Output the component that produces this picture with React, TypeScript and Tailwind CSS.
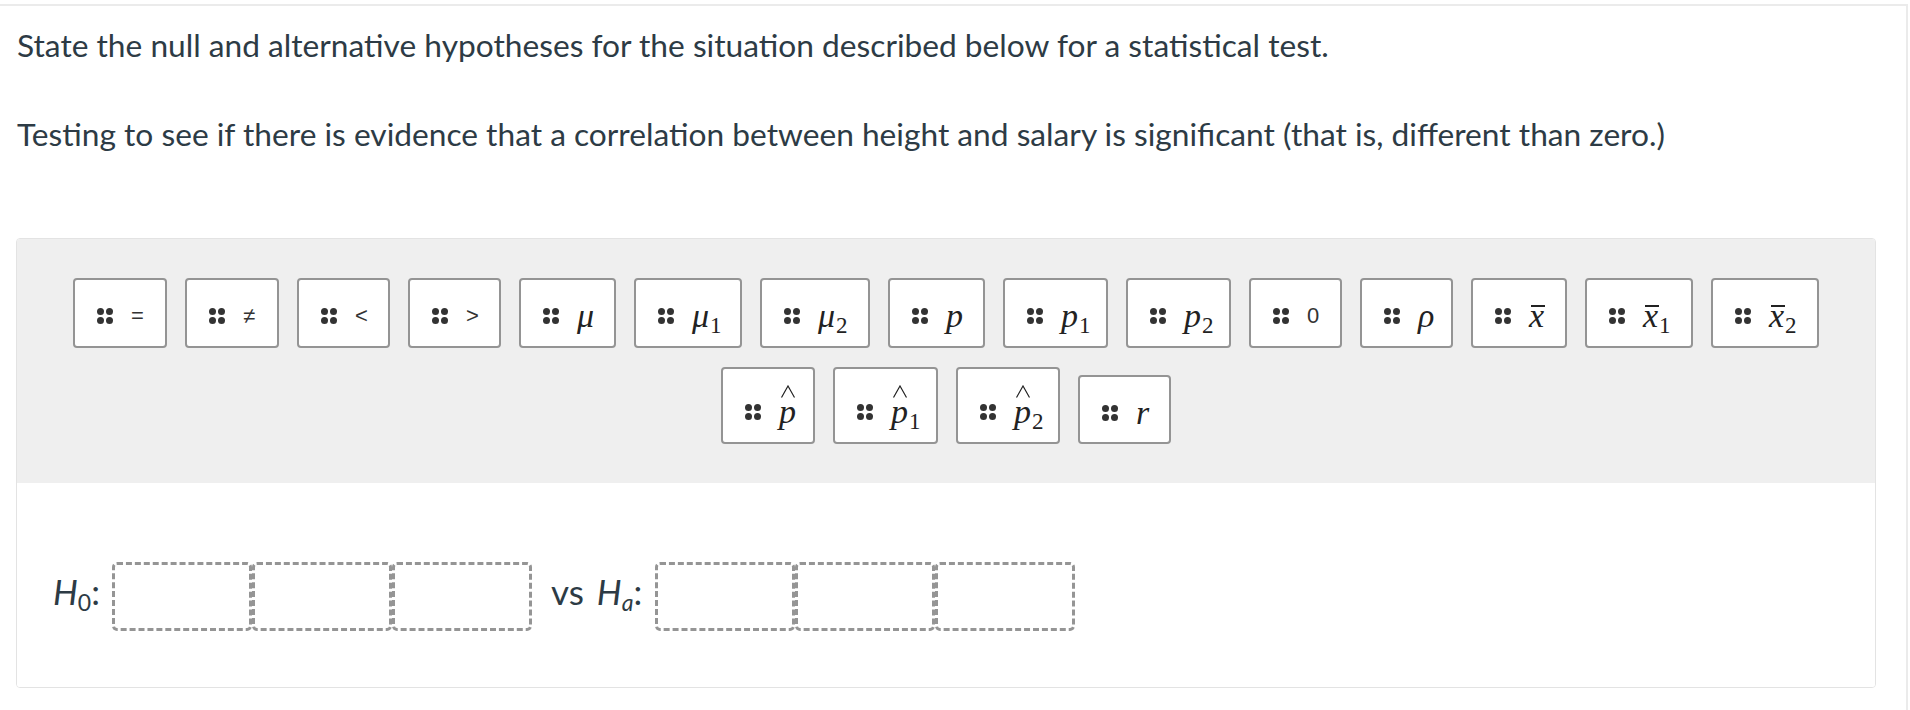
import React from "react";

const Grip = () => (
  <span className="grid grid-cols-2 gap-[2px] w-[16px] shrink-0">
    <span className="w-[7px] h-[7px] rounded-full bg-[#333]" />
    <span className="w-[7px] h-[7px] rounded-full bg-[#333]" />
    <span className="w-[7px] h-[7px] rounded-full bg-[#333]" />
    <span className="w-[7px] h-[7px] rounded-full bg-[#333]" />
  </span>
);

const Sans = ({ c }: { c: string }) => (
  <span className="font-['Liberation_Sans',Arial,sans-serif] text-[22px] leading-none text-[#333]">{c}</span>
);

const Sub = ({ c }: { c: string }) => (
  <span className="inline-block not-italic text-[23px] leading-none translate-y-[6px] ml-[1px]">{c}</span>
);

const MathI = ({
  c,
  sub,
  bar,
  hat,
}: {
  c: string;
  sub?: string;
  bar?: boolean;
  hat?: boolean;
}) => (
  <span className="font-['Liberation_Serif','Times_New_Roman',serif] text-[34px] leading-none text-[#222] inline-flex items-baseline">
    <span className="relative italic">
      {c}
      {bar && <span className="absolute left-[2px] right-[-1px] top-[6px] h-[1.5px] bg-[#222]" />}
      {hat && (
        <svg
          className="absolute left-1/2 -translate-x-1/2 top-[-10px]"
          width="15"
          height="13"
          viewBox="0 0 15 13"
        >
          <polyline points="1,12.5 7.5,1 14,12.5" fill="none" stroke="#222" strokeWidth="1.2" />
        </svg>
      )}
    </span>
    {sub && <Sub c={sub} />}
  </span>
);

type Btn = { w: string; h: string; pt: string; el: React.ReactNode };

const Button = ({ b }: { b: Btn }) => (
  <div
    className={`${b.w} ${b.h} ${b.pt} bg-white border-2 border-[#949494] rounded-[4px] flex items-center gap-[18px] pl-[22px] shrink-0`}
  >
    <Grip />
    {b.el}
  </div>
);

const row1: Btn[] = [
  { w: "w-[94px]", h: "h-[70px]", pt: "pt-[6px]", el: <Sans c="=" /> },
  { w: "w-[94px]", h: "h-[70px]", pt: "pt-[6px]", el: <Sans c="≠" /> },
  { w: "w-[93px]", h: "h-[70px]", pt: "pt-[6px]", el: <Sans c="<" /> },
  { w: "w-[93px]", h: "h-[70px]", pt: "pt-[6px]", el: <Sans c=">" /> },
  { w: "w-[97px]", h: "h-[70px]", pt: "pt-[6px]", el: <MathI c="μ" /> },
  { w: "w-[108px]", h: "h-[70px]", pt: "pt-[6px]", el: <MathI c="μ" sub="1" /> },
  { w: "w-[110px]", h: "h-[70px]", pt: "pt-[6px]", el: <MathI c="μ" sub="2" /> },
  { w: "w-[97px]", h: "h-[70px]", pt: "pt-[6px]", el: <MathI c="p" /> },
  { w: "w-[105px]", h: "h-[70px]", pt: "pt-[6px]", el: <MathI c="p" sub="1" /> },
  { w: "w-[105px]", h: "h-[70px]", pt: "pt-[6px]", el: <MathI c="p" sub="2" /> },
  { w: "w-[93px]", h: "h-[70px]", pt: "pt-[6px]", el: <Sans c="0" /> },
  { w: "w-[93px]", h: "h-[70px]", pt: "pt-[6px]", el: <MathI c="ρ" /> },
  { w: "w-[96px]", h: "h-[70px]", pt: "pt-[6px]", el: <MathI c="x" bar /> },
  { w: "w-[108px]", h: "h-[70px]", pt: "pt-[6px]", el: <MathI c="x" bar sub="1" /> },
  { w: "w-[108px]", h: "h-[70px]", pt: "pt-[6px]", el: <MathI c="x" bar sub="2" /> },
];

const row2: Btn[] = [
  { w: "w-[94px]", h: "h-[77px]", pt: "pt-[13px]", el: <MathI c="p" hat /> },
  { w: "w-[105px]", h: "h-[77px]", pt: "pt-[13px]", el: <MathI c="p" hat sub="1" /> },
  { w: "w-[104px]", h: "h-[77px]", pt: "pt-[13px]", el: <MathI c="p" hat sub="2" /> },
  { w: "w-[93px]", h: "h-[69px]", pt: "pt-[6px]", el: <MathI c="r" /> },
];

const DropBoxes = () => (
  <div className="flex">
    <div className="w-[140px] h-[69px] border-[3px] border-dashed border-[#959595] rounded-[5px]" />
    <div className="w-[140px] h-[69px] border-[3px] border-dashed border-[#959595] rounded-[5px]" />
    <div className="w-[140px] h-[69px] border-[3px] border-dashed border-[#959595] rounded-[5px]" />
  </div>
);

export default function App() {
  return (
    <div className="w-[1910px] h-[710px] bg-white overflow-hidden font-['Lato','Open_Sans',sans-serif] text-[#2d3b45]">
      <div className="mt-[4px] mr-[2px] h-[706px] border-t-2 border-r-2 border-[#ebebeb] pl-[16px] pr-[30px]">
        <p className="mt-[17px] text-[31.7px] leading-[44px] pl-[1px]">
          State the null and alternative hypotheses for the situation described below for a statistical test.
        </p>
        <p className="mt-[45px] text-[31.7px] leading-[44px] pl-[1px]">
          Testing to see if there is evidence that a correlation between height and salary is significant (that is, different than zero.)
        </p>
        <div className="mt-[82px] border border-[#e3e3e3] rounded-[4px] overflow-hidden">
          <div className="bg-[#efefef] pt-[39px] pb-[39px] flex flex-col items-center gap-[19px]">
            <div className="flex items-end gap-x-[18px]">
              {row1.map((b, i) => (
                <Button key={i} b={b} />
              ))}
            </div>
            <div className="flex items-end gap-x-[18px]">
              {row2.map((b, i) => (
                <Button key={i} b={b} />
              ))}
            </div>
          </div>
          <div className="bg-white flex items-center pl-[36px] pt-[79px] pb-[56px]">
            <span className="flex items-baseline text-[35px] leading-none -translate-y-[5px]">
              <span className="italic">H</span>
              <span className="inline-block text-[23px] translate-y-[6px]">0</span>
              <span>:</span>
            </span>
            <div className="ml-[12px]">
              <DropBoxes />
            </div>
            <span className="ml-[19px] text-[35px] leading-none -translate-y-[5px]">vs</span>
            <span className="ml-[13px] flex items-baseline text-[35px] leading-none -translate-y-[5px]">
              <span className="italic">H</span>
              <span className="inline-block italic text-[23px] translate-y-[6px]">a</span>
              <span>:</span>
            </span>
            <div className="ml-[13px]">
              <DropBoxes />
            </div>
          </div>
        </div>
      </div>
    </div>
  );
}
